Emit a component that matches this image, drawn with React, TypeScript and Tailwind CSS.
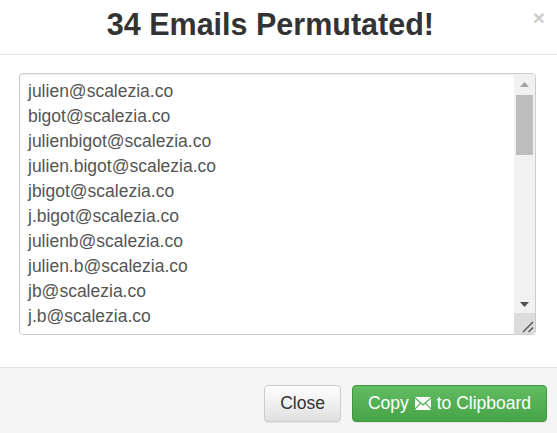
const emails = [
  'julien@scalezia.co',
  'bigot@scalezia.co',
  'julienbigot@scalezia.co',
  'julien.bigot@scalezia.co',
  'jbigot@scalezia.co',
  'j.bigot@scalezia.co',
  'julienb@scalezia.co',
  'julien.b@scalezia.co',
  'jb@scalezia.co',
  'j.b@scalezia.co',
]

export default function App() {
  return (
    <div className="flex h-[433px] w-[557px] flex-col overflow-hidden bg-white font-['Liberation_Sans',Arial,sans-serif]">
      {/* Header */}
      <div className="flex h-[55px] shrink-0 items-start border-b border-[#e5e5e5] pl-[15px] pr-[12px]">
        <h1 className="mr-[7px] flex-1 whitespace-nowrap pt-[8px] text-center text-[30.5px] font-bold leading-[33px] text-[#333]">34 Emails Permutated!</h1>
        <span className="mt-[7px] text-[21px] font-bold leading-[21px] text-[#ccc]">×</span>
      </div>

      {/* Body */}
      <div className="flex-1 pb-[32px] pl-[19px] pr-[21px] pt-[18px]">
        <div className="flex h-[262px] overflow-hidden rounded-[4px] border border-[#ccc] shadow-[inset_0_1px_1px_rgba(0,0,0,0.075)]">
          <div className="flex-1 overflow-hidden pl-[8px] pt-[5px] text-[17.5px] leading-[25px] text-[#555]">
            {emails.map((email) => (
              <div key={email}>{email}</div>
            ))}
          </div>
          <div className="flex w-[21px] shrink-0 flex-col items-center bg-[#f1f1f1]">
            <div className="flex h-[21px] shrink-0 items-center justify-center">
              <svg width="9" height="5" viewBox="0 0 9 5"><path d="M4.5 0L9 5H0z" fill="#a3a3a3" /></svg>
            </div>
            <div className="h-[60px] w-[17px] shrink-0 bg-[#bdbdbd]" />
            <div className="flex-1" />
            <div className="flex h-[17px] shrink-0 items-center justify-center">
              <svg width="9" height="5" viewBox="0 0 9 5"><path d="M0 0H9L4.5 5z" fill="#505050" /></svg>
            </div>
            <div className="flex h-[21px] w-full shrink-0 items-end justify-end bg-[#dcdcdc] pb-[1px] pr-[1px]">
              <svg width="12" height="12" viewBox="0 0 12 12">
                <path d="M1 11L11 1M6.5 11L11 6.5" stroke="#505050" strokeWidth="1.4" fill="none" />
              </svg>
            </div>
          </div>
        </div>
      </div>

      {/* Footer */}
      <div className="flex h-[66px] shrink-0 items-start justify-end gap-[11px] border-t border-[#e5e5e5] bg-[#f5f5f5] pr-[10px] pt-[17px]">
        <button
          type="button"
          className="h-[37px] w-[77px] rounded-[4px] border border-[#ccc] bg-gradient-to-b from-white to-[#e0e0e0] text-[17.5px] text-[#333] shadow-[0_1px_1px_rgba(0,0,0,0.075)]"
        >
          Close
        </button>
        <button
          type="button"
          className="flex h-[37px] w-[195px] items-center justify-center gap-[6px] whitespace-nowrap rounded-[4px] border border-[#419641] bg-gradient-to-b from-[#62bc62] to-[#47a447] text-[17.5px] text-white shadow-[0_1px_1px_rgba(0,0,0,0.075)]"
        >
          <span>Copy</span>
          <svg width="16" height="13" viewBox="0 0 15 12" fill="#fff">
            <path d="M0 0H15L7.5 6.5z" />
            <path d="M0 1.5L4.5 5.5L0 10.5zM15 1.5L10.5 5.5L15 10.5zM5.3 6.3L7.5 8.2L9.7 6.3L15 12H0z" />
          </svg>
          <span>to Clipboard</span>
        </button>
      </div>
    </div>
  )
}
